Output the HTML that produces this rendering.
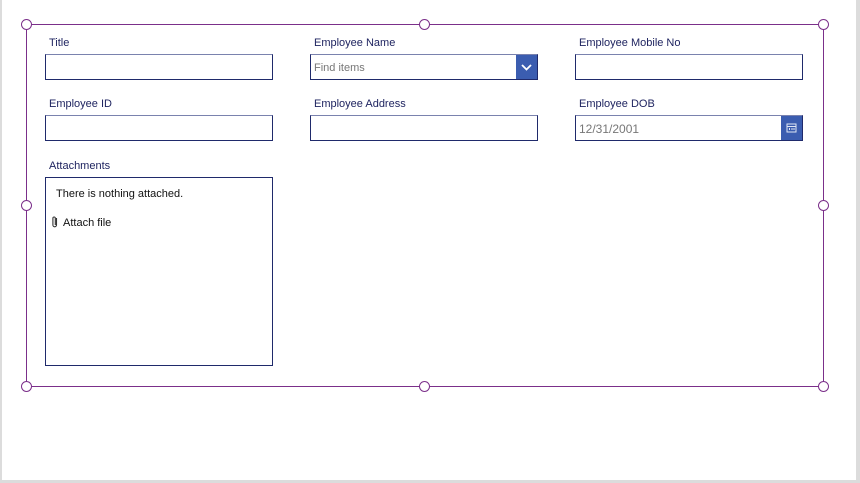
<!DOCTYPE html>
<html><head><style>
body{margin:0;width:860px;height:483px;background:#dcdcdc;position:relative;overflow:hidden;font-family:"Liberation Sans",sans-serif}
.page{position:absolute;left:2px;top:0;width:854px;height:480px;background:#fff}
.sel{position:absolute;left:26px;top:24px;width:796px;height:361px;border:1px solid #7b2f8a}
.h{position:absolute;width:9px;height:9px;border:1.5px solid #7b2f8a;border-radius:50%;background:#fff}
.lbl{position:absolute;font-size:11px;color:#1f2460}
.in{position:absolute;width:226px;height:24px;border:1px solid #1f2a6b;border-top-color:#7a82ae;background:#fff;box-sizing:content-box}
.btn{position:absolute;top:0;right:0;width:21px;height:24px;background:#3b5db0}
.ph{position:absolute;left:3px;top:7px;font-size:11px;color:#777}
</style></head><body>
<div class="page"></div>
<div class="sel"></div>
<div class="h" style="left:21px;top:19px"></div>
<div class="h" style="left:419px;top:19px"></div>
<div class="h" style="left:818px;top:19px"></div>
<div class="h" style="left:21px;top:200px"></div>
<div class="h" style="left:818px;top:200px"></div>
<div class="h" style="left:21px;top:381px"></div>
<div class="h" style="left:419px;top:381px"></div>
<div class="h" style="left:818px;top:381px"></div>

<div class="lbl" style="left:49px;top:37px">Title</div>
<div class="in" style="left:45px;top:54px"></div>
<div class="lbl" style="left:314px;top:37px">Employee Name</div>
<div class="in" style="left:310px;top:54px"><span class="ph">Find items</span><div class="btn"><svg width="21" height="24"><path d="M6 10l4.5 4.5L15 10" stroke="#fff" stroke-width="1.8" fill="none"/></svg></div></div>
<div class="lbl" style="left:579px;top:37px">Employee Mobile No</div>
<div class="in" style="left:575px;top:54px"></div>

<div class="lbl" style="left:49px;top:98px">Employee ID</div>
<div class="in" style="left:45px;top:115px"></div>
<div class="lbl" style="left:314px;top:98px">Employee Address</div>
<div class="in" style="left:310px;top:115px"></div>
<div class="lbl" style="left:579px;top:98px">Employee DOB</div>
<div class="in" style="left:575px;top:115px"><span class="ph" style="font-size:12px;top:6px">12/31/2001</span><div class="btn"><svg width="21" height="24"><rect x="6" y="8" width="9" height="8" stroke="#dfe6f5" fill="none"/><line x1="6" y1="10.5" x2="15" y2="10.5" stroke="#dfe6f5"/><rect x="8" y="12" width="1" height="2" fill="#dfe6f5"/><rect x="10.5" y="12" width="1" height="2" fill="#dfe6f5"/><rect x="12.5" y="12" width="1" height="2" fill="#dfe6f5"/></svg></div></div>

<div class="lbl" style="left:49px;top:160px">Attachments</div>
<div class="in" style="left:45px;top:177px;height:187px;border-top-color:#1f2a6b"></div>
<div style="position:absolute;left:56px;top:188px;font-size:11px;color:#111">There is nothing attached.</div>
<svg style="position:absolute;left:51px;top:215px" width="8" height="14"><path d="M5.5 3v7a1.8 1.8 0 0 1-3.6 0V3.2a1.2 1.2 0 0 1 2.4 0V10" stroke="#333" stroke-width="1.1" fill="none"/></svg>
<div style="position:absolute;left:63px;top:217px;font-size:11px;color:#111">Attach file</div>
</body></html>
